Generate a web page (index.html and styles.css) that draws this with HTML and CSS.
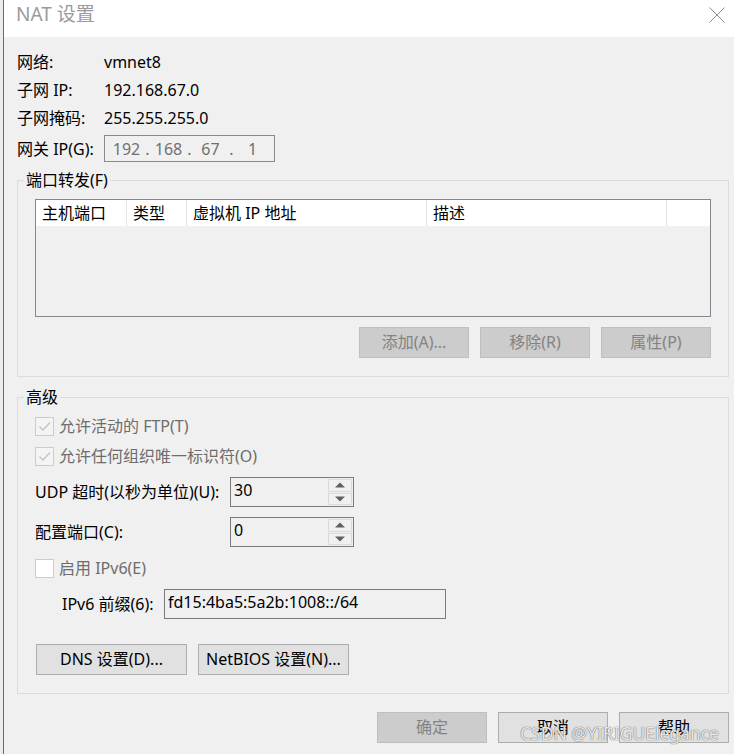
FILE: index.html
```html
<!DOCTYPE html>
<html lang="zh-CN">
<head>
<meta charset="utf-8">
<title>NAT 设置</title>
<link rel="stylesheet" href="styles.css">
</head>
<body>
<div class="screen">
  <div class="backdrop"></div>
  <div class="window">
    <div class="titlebar">
      <span class="title">NAT 设置</span>
      <svg class="close" width="16" height="16" viewBox="0 0 16 16"><path d="M0.5 0.5L15.5 15.5M15.5 0.5L0.5 15.5" stroke="#8c8c8c" stroke-width="1" fill="none"/></svg>
    </div>
    <div class="body">
      <div class="info">
        <span>网络:</span><span>vmnet8</span>
        <span>子网 IP:</span><span>192.168.67.0</span>
        <span>子网掩码:</span><span>255.255.255.0</span>
      </div>
      <div class="gateway">
        <span class="gw-label">网关 IP(G):</span>
        <div class="ipbox">
          <span class="oct">192</span><span class="dot">.</span><span class="oct">168</span><span class="dot">.</span><span class="oct">67</span><span class="dot">.</span><span class="oct">1</span>
        </div>
      </div>

      <fieldset class="group group-ports">
        <legend>端口转发(F)</legend>
        <div class="gbody gbody-ports">
          <div class="list">
            <div class="list-head">
              <span class="col c1">主机端口</span><span class="col c2">类型</span><span class="col c3">虚拟机 IP 地址</span><span class="col c4">描述</span><span class="col c5"></span>
            </div>
          </div>
          <div class="btnrow">
            <button class="btn disabled">添加(A)...</button>
            <button class="btn disabled">移除(R)</button>
            <button class="btn disabled">属性(P)</button>
          </div>
        </div>
      </fieldset>

      <fieldset class="group group-adv">
        <legend>高级</legend>
        <div class="gbody gbody-adv">
          <div class="check">
            <span class="box"><svg width="17" height="17" viewBox="0 0 17 17"><path d="M3.5 8.5L7 12L14 4.5" stroke="#c2c2c2" stroke-width="1.3" fill="none"/></svg></span>
            <span>允许活动的 FTP(T)</span>
          </div>
          <div class="check">
            <span class="box"><svg width="17" height="17" viewBox="0 0 17 17"><path d="M3.5 8.5L7 12L14 4.5" stroke="#c2c2c2" stroke-width="1.3" fill="none"/></svg></span>
            <span>允许任何组织唯一标识符(O)</span>
          </div>
          <div class="field row-udp">
            <span class="flabel">UDP 超时(以秒为单位)(U):</span>
            <div class="spinner">
              <span class="spin-text">30</span>
              <span class="spin-btns">
                <span class="sbtn"><svg width="10" height="6" viewBox="0 0 10 6"><path d="M0 5.5L5 0.5L10 5.5Z" fill="#606060"/></svg></span>
                <span class="sbtn"><svg width="10" height="6" viewBox="0 0 10 6"><path d="M0 0.5L5 5.5L10 0.5Z" fill="#606060"/></svg></span>
              </span>
            </div>
          </div>
          <div class="field row-port">
            <span class="flabel">配置端口(C):</span>
            <div class="spinner">
              <span class="spin-text">0</span>
              <span class="spin-btns">
                <span class="sbtn"><svg width="10" height="6" viewBox="0 0 10 6"><path d="M0 5.5L5 0.5L10 5.5Z" fill="#606060"/></svg></span>
                <span class="sbtn"><svg width="10" height="6" viewBox="0 0 10 6"><path d="M0 0.5L5 5.5L10 0.5Z" fill="#606060"/></svg></span>
              </span>
            </div>
          </div>
          <div class="check row-ipv6">
            <span class="box empty"></span>
            <span>启用 IPv6(E)</span>
          </div>
          <div class="field row-prefix">
            <span class="plabel">IPv6 前缀(6):</span>
            <div class="textbox">fd15:4ba5:5a2b:1008::/64</div>
          </div>
          <div class="dnsrow">
            <button class="btn wide">DNS 设置(D)...</button>
            <button class="btn wide">NetBIOS 设置(N)...</button>
          </div>
        </div>
      </fieldset>

      <div class="footer">
        <button class="btn disabled">确定</button>
        <button class="btn">取消</button>
        <button class="btn">帮助</button>
      </div>
    </div>
  </div>
  <div class="watermark">CSDN @YIRIGUElegance</div>
</div>
</body>
</html>
```

FILE: styles.css
```css
* { box-sizing: border-box; }
html, body { margin: 0; padding: 0; }
body {
  width: 734px;
  height: 754px;
  overflow: hidden;
  font-family: "Noto Sans", "Noto Sans CJK SC", sans-serif;
  font-size: 16px;
  color: #000;
  background: #f0f0f0;
}
.screen { position: relative; display: flex; height: 754px; }
.backdrop { width: 3px; background: #ececec; }
.window {
  flex: 1;
  display: flex;
  flex-direction: column;
  border-left: 1px solid #6b6b6b;
  background: #f0f0f0;
}
.titlebar {
  height: 37px;
  background: #fff;
  display: flex;
  align-items: flex-start;
  padding-left: 12px;
}
.title { font-size: 19px; line-height: 29px; color: #9a9a9a; }
.close { margin-left: auto; margin-top: 7px; margin-right: 9px; }

.body { padding: 11px 5px 0 13px; }

.info {
  display: grid;
  grid-template-columns: 87px auto;
  grid-auto-rows: 28px;
  align-items: center;
  line-height: 20px;
}
.gateway { display: flex; align-items: center; margin-top: 3px; height: 27px; }
.gw-label { width: 87px; line-height: 20px; }
.ipbox {
  width: 171px;
  height: 27px;
  border: 1px solid #8a8a8a;
  display: flex;
  align-items: center;
  padding-left: 7px;
  color: #707070;
  line-height: 20px;
}
.oct { width: 29px; text-align: center; }
.dot { width: 13px; text-align: center; }

fieldset.group {
  margin: 8px 0 0;
  padding: 0;
  border: 1px solid #dcdcdc;
  min-width: 0;
}
fieldset.group-adv { margin-top: 10px; }
legend { margin-left: 6px; padding: 0 2px; line-height: 20px; }
.gbody-ports { padding: 9px 17px 18px; }
.gbody-adv { padding: 4px 17px 18px; }

.list { height: 118px; border: 1px solid #828790; background: #f0f0f0; }
.list-head { display: flex; height: 26px; background: #fff; }
.col { border-right: 1px solid #e5e5e5; padding-left: 6px; line-height: 26px; white-space: nowrap; }
.c1 { width: 91px; }
.c2 { width: 60px; }
.c3 { width: 240px; }
.c4 { width: 240px; }
.c5 { flex: 1; border-right: none; }

.btn {
  width: 110px;
  height: 31px;
  font: inherit;
  line-height: 29px;
  padding: 0;
  border: 1px solid #adadad;
  background: #e1e1e1;
  color: #000;
}
.btn.disabled { background: #cccccc; border-color: #bfbfbf; color: #838383; }
.btnrow { display: flex; justify-content: flex-end; gap: 11px; margin-top: 10px; }

.check { display: flex; align-items: center; height: 30px; color: #6d6d6d; line-height: 20px; }
.box {
  width: 19px;
  height: 19px;
  border: 1px solid #cccccc;
  background: #f4f4f4;
  margin-right: 5px;
  display: flex;
  align-items: center;
  justify-content: center;
}
.box.empty { background: #fff; }
.row-ipv6 { margin-top: 6px; }

.field { display: flex; align-items: center; height: 30px; line-height: 20px; }
.row-udp { margin-top: 6px; }
.row-port { margin-top: 10px; }
.flabel { width: 195px; }
.spinner { width: 124px; height: 30px; border: 1px solid #7a7a7a; display: flex; }
.spin-text { flex: 1; padding: 2px 0 0 3px; line-height: 20px; }
.spin-btns { width: 24px; margin: 1px 1px 1px 0; display: flex; flex-direction: column; gap: 1px; }
.sbtn {
  flex: 1;
  border: 1px solid #dadada;
  background: #f0f0f0;
  display: flex;
  align-items: center;
  justify-content: center;
}

.row-prefix { margin-top: 6px; padding-left: 27px; }
.plabel { width: 102px; }
.textbox {
  width: 282px;
  height: 30px;
  border: 1px solid #7a7a7a;
  padding: 2px 0 0 3px;
  line-height: 20px;
}

.dnsrow { display: flex; gap: 11px; margin-top: 25px; padding-left: 1px; }
.btn.wide { width: 151px; }

.footer { display: flex; justify-content: flex-end; gap: 11px; margin-top: 18px; }

.watermark {
  position: absolute;
  right: 15px;
  top: 721px;
  font-size: 17.5px;
  line-height: 24px;
  color: rgba(255, 255, 255, 0.85);
  text-shadow: 0 0 1px #6a6a6a, 0 0 1px #6a6a6a;
  white-space: nowrap;
}
```
